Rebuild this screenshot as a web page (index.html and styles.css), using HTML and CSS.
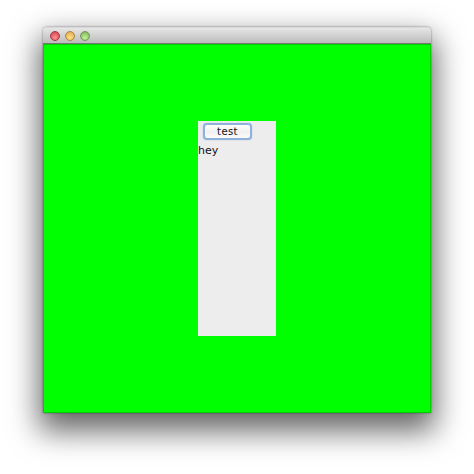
FILE: index.html
```html
<!DOCTYPE html>
<html lang="en">
<head>
    <meta charset="UTF-8">
    <title>test</title>
    <link rel="stylesheet" href="styles.css">
</head>
<body>
    <div class="window">
        <div class="titlebar">
            <span class="light red"></span>
            <span class="light yellow"></span>
            <span class="light green"></span>
        </div>
        <div class="content">
            <div class="panel">
                <button class="btn" type="button">test</button>
                <div class="label">hey</div>
            </div>
        </div>
    </div>
</body>
</html>
```

FILE: styles.css
```css
html, body {
    margin: 0;
    height: 100%;
    background-color: #fff;
    overflow: hidden;
}
body {
    padding: 27px 0 0 43px;
    box-sizing: border-box;
    font-family: "DejaVu Sans", sans-serif;
}
.window {
    width: 388px;
    height: 386px;
    display: flex;
    flex-direction: column;
    border-radius: 4px 4px 0 0;
    box-shadow: 0 14px 30px 4px rgba(0, 0, 0, 0.6), 0 0 2px rgba(0, 0, 0, 0.5);
}
.titlebar {
    height: 17px;
    box-sizing: border-box;
    display: flex;
    align-items: center;
    gap: 5px;
    padding-left: 7px;
    background: linear-gradient(#e6e6e6, #bcbcbc);
    border-top: 1px solid #d8d8d8;
    border-bottom: 1px solid #777;
    border-radius: 4px 4px 0 0;
}
.light {
    width: 10px;
    height: 10px;
    box-sizing: border-box;
    border-radius: 50%;
    border: 1px solid #8a8a8a;
}
.red {
    background: radial-gradient(circle at 50% 70%, #ff8f8f, #d23a48);
    border-color: #a5343f;
}
.yellow {
    background: radial-gradient(circle at 50% 70%, #ffe08a, #dfa244);
    border-color: #a9853f;
}
.green {
    background: radial-gradient(circle at 50% 70%, #c4ee9a, #74ad55);
    border-color: #6f9a58;
}
.content {
    flex: 1;
    display: flex;
    justify-content: center;
    align-items: center;
    background-color: #0f0;
    box-shadow: inset 0 0 0 1px rgba(0, 90, 0, 0.3);
}
.panel {
    width: 78px;
    height: 215px;
    padding-top: 2px;
    box-sizing: border-box;
    background-color: #ededed;
}
.btn {
    display: block;
    width: 49px;
    height: 17px;
    margin: 0 0 0 5px;
    padding: 0;
    font-family: inherit;
    font-size: 10px;
    letter-spacing: 0.4px;
    color: #111;
    background: linear-gradient(#fff, #f1f1f1 50%, #fbfbfb);
    border: 2px solid #8fb2dc;
    border-radius: 4px;
    box-shadow: 0 0 1px #6f9ad0;
}
.label {
    margin-top: 3px;
    font-size: 11px;
    line-height: 15px;
    color: #111;
}
```
